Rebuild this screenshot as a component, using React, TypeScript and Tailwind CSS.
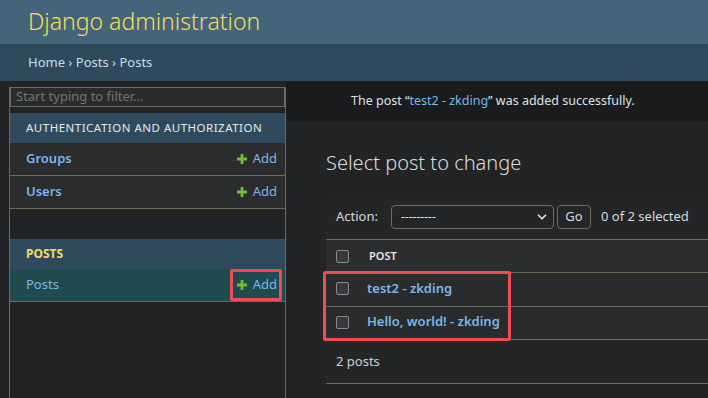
import { ChevronDown } from "lucide-react";

const border = "border-[#6f6a5e]";

function Plus() {
  return (
    <svg width="10" height="10" viewBox="0 0 10 10" className="shrink-0">
      <path d="M3.6 0h2.8v3.6H10v2.8H6.4V10H3.6V6.4H0V3.6h3.6z" fill="#70bf2b" />
    </svg>
  );
}

function AddLink() {
  return (
    <span className="flex items-center gap-[6px] text-[13px] text-[#79b8ea]">
      <Plus />
      Add
    </span>
  );
}

function Checkbox() {
  return <span className="block w-[13px] h-[13px] rounded-[2px] border border-[#8a8a8a] bg-[#38393b]" />;
}

export default function App() {
  return (
    <div className="w-[708px] h-[398px] overflow-hidden bg-[#212325] font-['Noto_Sans',sans-serif]">
      {/* Header */}
      <div className="h-[44px] bg-[#44647a] pl-[28px] flex items-center">
        <h1 className="text-[23px] font-light text-[#f5dd5d] leading-none pb-[2px]">Django administration</h1>
      </div>
      <div className="h-[37px] bg-[#2f4a5c] pl-[28px] flex items-center text-[13px] text-[#c7dde9]">
        Home › Posts › Posts
      </div>

      <div className="flex">
        {/* Sidebar */}
        <div className="w-[286px] pl-[9px] shrink-0">
          <div className={`h-[317px] border-l border-r ${border} relative`}>
            <div className={`mt-[6px] h-[20px] border ${border} bg-[#2a2b2d] flex items-center px-[5px] text-[13px] text-[#77756f]`}>
              Start typing to filter…
            </div>

            <div className="mt-[6px]">
              <div className="h-[30px] bg-[#2f4a5c] flex items-center pl-[16px] text-[11.5px] tracking-[0.5px] text-[#e2eaee]">
                AUTHENTICATION AND AUTHORIZATION
              </div>
              <div className={`h-[33px] border-b ${border} bg-[#2b2c2e] flex items-center justify-between pl-[16px] pr-[8px]`}>
                <span className="text-[13px] font-semibold text-[#79b8ea]">Groups</span>
                <AddLink />
              </div>
              <div className={`h-[33px] border-b ${border} bg-[#2b2c2e] flex items-center justify-between pl-[16px] pr-[8px]`}>
                <span className="text-[13px] font-semibold text-[#79b8ea]">Users</span>
                <AddLink />
              </div>
            </div>

            <div className="mt-[30px]">
              <div className="h-[30px] bg-[#2f4a5c] flex items-center pl-[16px] text-[12px] font-bold text-[#f5dd5d]">
                POSTS
              </div>
              <div className={`h-[33px] border-b ${border} bg-[#1e4a50] flex items-center justify-between pl-[16px] pr-[8px]`}>
                <span className="text-[13px] text-[#79b8ea]">Posts</span>
                <div className="relative">
                  <AddLink />
                  <div className="absolute -left-[7px] -right-[5px] -top-[6px] -bottom-[6px] border-[3px] border-[#f04a52] rounded-[2px]" />
                </div>
              </div>
            </div>
          </div>
        </div>

        {/* Main */}
        <div className="flex-1 min-w-0">
          <div className="h-[40px] bg-[#1a1b1d] flex items-center pl-[65px] text-[12.5px] text-[#dde3e8]">
            The post “<span className="text-[#79b8ea]">test2 - zkding</span>” was added successfully.
          </div>

          <div className="pl-[40px]">
            <h2 className="mt-[30px] text-[20px] font-light text-[#dcdcdc] leading-[24px]">Select post to change</h2>

            <div className="mt-[21px] bg-[#232527]">
              <div className="h-[43px] flex items-center pl-[10px] pb-[2px] text-[13px] text-[#d6dade]">
                <span>Action:</span>
                <div className={`ml-[13px] w-[163px] h-[24px] border ${border} rounded-[4px] flex items-center justify-between pl-[9px] pr-[4px]`}>
                  <span className="text-[12px] text-[#e0e0e0]">---------</span>
                  <ChevronDown size={14} strokeWidth={3} className="text-[#e0e0e0]" />
                </div>
                <div className={`ml-[3px] w-[34px] h-[24px] border ${border} rounded-[4px] flex items-center justify-center text-[13px]`}>
                  Go
                </div>
                <span className="ml-[10px]">0 of 2 selected</span>
              </div>

              <div className="relative">
                <div className={`h-[33px] border-t ${border} bg-[#2c2d2f] flex items-center pl-[10px]`}>
                  <Checkbox />
                  <span className="ml-[20px] text-[11px] font-semibold text-[#e4e6e8]">POST</span>
                </div>
                <div className={`h-[34px] border-t ${border} bg-[#2a2b2d] flex items-center pl-[10px] pb-[2px]`}>
                  <Checkbox />
                  <span className="ml-[18px] text-[13px] font-semibold text-[#79b8ea]">test2 - zkding</span>
                </div>
                <div className={`h-[34px] border-t border-b ${border} bg-[#2a2b2d] flex items-center pl-[10px] pb-[2px]`}>
                  <Checkbox />
                  <span className="ml-[18px] text-[13px] font-semibold text-[#79b8ea]">Hello, world! - zkding</span>
                </div>
                <div className="absolute left-[-3px] top-[32px] w-[188px] h-[70px] border-[3px] border-[#f04a52] rounded-[2px]" />
              </div>

              <div className={`h-[44px] border-b ${border} flex items-center pl-[10px] text-[13px] text-[#c9d0d6]`}>
                2 posts
              </div>
            </div>
          </div>
        </div>
      </div>
    </div>
  );
}
